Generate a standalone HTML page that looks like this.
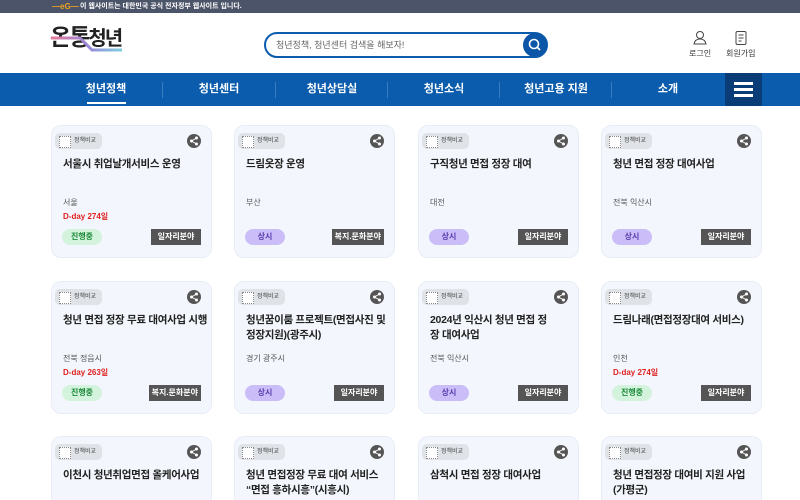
<!DOCTYPE html>
<html style="width:800px;height:500px;overflow:hidden"><head><meta charset="utf-8"><style>
*{margin:0;padding:0;box-sizing:border-box}
body{width:800px;height:500px;overflow:hidden;background:#fff;font-family:"Liberation Sans","Noto Sans CJK KR",sans-serif;position:relative;color:#222}
.top{position:absolute;left:0;top:0;width:800px;height:13px;background:#4b5468;color:#fff;font-size:7px;font-weight:bold;line-height:13px}
.top span{position:absolute;left:80px}
.top i{position:absolute;left:52px;top:2px;font-style:normal;color:#f0a020;font-size:8px;line-height:9px}
.logo{position:absolute;left:50px;top:22px;width:75px;height:34px;font-size:23px;font-weight:bold;letter-spacing:-2px;color:#222;line-height:30px;white-space:nowrap}
.search{position:absolute;left:264px;top:32px;width:284px;height:26px;border:2px solid #0b5cad;border-radius:13px;font-size:9px;color:#666;line-height:22px;padding-left:10px}
.sbtn{position:absolute;right:-1px;top:-1px;width:24px;height:24px;border-radius:12px;background:#0b56a6}
.util{position:absolute;top:30px;font-size:8px;color:#333;text-align:center}
.nav{position:absolute;left:0;top:73px;width:800px;height:33px;background:#0b5cad}
.nav .m{position:absolute;top:0;height:33px;line-height:32px;color:#fff;font-size:11px;font-weight:bold;text-align:center;width:112px}
.sep{position:absolute;top:9px;width:1px;height:16px;background:#3a7cc0}
.ham{position:absolute;left:725px;top:0;width:37px;height:33px;background:#0a3d78}
.ham b{position:absolute;left:9px;width:19px;height:3px;background:#fff}
.card{position:absolute;width:161px;height:133px;background:#f3f7fd;border:1px solid #e8edf5;border-radius:10px}
.chk{position:absolute;left:3px;top:7px;width:47px;height:16px;background:#dfe2e7;border-radius:5px;font-size:6px;line-height:16px;padding-left:19px;color:#444;white-space:nowrap}
.chk:before{content:"";position:absolute;left:4px;top:3px;width:10px;height:10px;border:1px dotted #888;background:#fff}
.sh{position:absolute;left:135px;top:8px;width:14px;height:14px;border-radius:7px;background:#555}
.t{position:absolute;left:11px;top:31px;width:138px;font-size:10.5px;font-weight:bold;line-height:15px;color:#222;letter-spacing:-0.3px}
.r{position:absolute;left:11px;font-size:8px;color:#555}
.d{position:absolute;left:11px;font-size:8px;color:#e02020;font-weight:bold}
.st{position:absolute;left:10px;bottom:12px;width:40px;height:16px;border-radius:8px;font-size:8px;line-height:16px;text-align:center;font-weight:bold}
.g{background:#d4f3dc;color:#1a8a3a}.p{background:#cbbdf7;color:#5a3fb0}
.cat{position:absolute;right:10px;bottom:12px;min-width:50px;padding:0 3px;height:16px;background:#555;color:#fff;font-size:8px;line-height:16px;text-align:center;font-weight:bold;white-space:nowrap}
.r3{height:64px;border-bottom:none;border-radius:10px 10px 0 0}
</style></head><body>
<div class="top"><i>—eG—</i><span>이 웹사이트는 대한민국 공식 전자정부 웹사이트 입니다.</span></div>
<div class="logo">온통<span style="font-size:20px">청년</span>
<svg style="position:absolute;left:0;top:10px" width="75" height="22"><path d="M1 6 H30 L42 18 H72" stroke="url(#gr)" stroke-width="3" fill="none"/><defs><linearGradient id="gr"><stop offset="0" stop-color="#e77a9a"/><stop offset=".5" stop-color="#9b86d6"/><stop offset="1" stop-color="#7fcfe0"/></linearGradient></defs></svg></div>
<div class="search">청년정책, 청년센터 검색을 해보자!<div class="sbtn"><svg width="24" height="24"><circle cx="11" cy="11" r="4.5" stroke="#fff" stroke-width="1.6" fill="none"/><path d="M14.5 14.5 L17 17" stroke="#fff" stroke-width="1.6"/></svg></div></div>
<div class="util" style="left:689px"><svg width="16" height="16"><circle cx="8" cy="5" r="3.5" stroke="#444" fill="none"/><path d="M2 14 Q3 9 8 9 Q13 9 14 14 Z" stroke="#444" fill="none"/></svg><br>로그인</div>
<div class="util" style="left:726px"><svg width="16" height="16"><rect x="3" y="1.5" width="10" height="13" rx="1.5" stroke="#444" fill="none"/><path d="M5.5 5h5M5.5 8h5M5.5 11h3" stroke="#444"/></svg><br>회원가입</div>
<div class="nav">
<div class="m" style="left:50px">청년정책<b style="position:absolute;left:37px;bottom:2px;width:39px;height:2px;background:#fff"></b></div>
<span class="sep" style="left:162px"></span><div class="m" style="left:163px">청년센터</div>
<span class="sep" style="left:275px"></span><div class="m" style="left:276px">청년상담실</div>
<span class="sep" style="left:387px"></span><div class="m" style="left:388px">청년소식</div>
<span class="sep" style="left:499px"></span><div class="m" style="left:500px">청년고용 지원</div>
<span class="sep" style="left:611px"></span><div class="m" style="left:612px">소개</div>
<div class="ham"><b style="top:9px"></b><b style="top:15px"></b><b style="top:21px"></b></div>
</div>

<svg width="0" height="0" style="position:absolute"><defs><g id="s"><circle cx="9.5" cy="4" r="1.5" fill="#fff"/><circle cx="4.5" cy="7" r="1.5" fill="#fff"/><circle cx="9.5" cy="10" r="1.5" fill="#fff"/><path d="M9.5 4L4.5 7L9.5 10" stroke="#fff" stroke-width=".9" fill="none"/></g></defs></svg>

<div class="card" style="left:51px;top:125px"><div class="chk">정책비교</div><svg class="sh"><use href="#s"/></svg><div class="t">서울시 취업날개서비스 운영</div><div class="r" style="top:71px">서울</div><div class="d" style="top:85px">D-day 274일</div><div class="st g">진행중</div><div class="cat">일자리분야</div></div>
<div class="card" style="left:234px;top:125px"><div class="chk">정책비교</div><svg class="sh"><use href="#s"/></svg><div class="t">드림옷장 운영</div><div class="r" style="top:71px">부산</div><div class="st p">상시</div><div class="cat">복지.문화분야</div></div>
<div class="card" style="left:418px;top:125px"><div class="chk">정책비교</div><svg class="sh"><use href="#s"/></svg><div class="t">구직청년 면접 정장 대여</div><div class="r" style="top:71px">대전</div><div class="st p">상시</div><div class="cat">일자리분야</div></div>
<div class="card" style="left:601px;top:125px"><div class="chk">정책비교</div><svg class="sh"><use href="#s"/></svg><div class="t">청년 면접 정장 대여사업</div><div class="r" style="top:71px">전북 익산시</div><div class="st p">상시</div><div class="cat">일자리분야</div></div>

<div class="card" style="left:51px;top:281px"><div class="chk">정책비교</div><svg class="sh"><use href="#s"/></svg><div class="t" style="width:150px">청년 면접 정장 무료 대여사업 시행</div><div class="r" style="top:71px">전북 정읍시</div><div class="d" style="top:85px">D-day 263일</div><div class="st g">진행중</div><div class="cat">복지.문화분야</div></div>
<div class="card" style="left:234px;top:281px"><div class="chk">정책비교</div><svg class="sh"><use href="#s"/></svg><div class="t" style="width:145px">청년꿈이룸 프로젝트(면접사진 및 정장지원)(광주시)</div><div class="r" style="top:71px">경기 광주시</div><div class="st p">상시</div><div class="cat">일자리분야</div></div>
<div class="card" style="left:418px;top:281px"><div class="chk">정책비교</div><svg class="sh"><use href="#s"/></svg><div class="t" style="width:125px">2024년 익산시 청년 면접 정장 대여사업</div><div class="r" style="top:71px">전북 익산시</div><div class="st p">상시</div><div class="cat">일자리분야</div></div>
<div class="card" style="left:601px;top:281px"><div class="chk">정책비교</div><svg class="sh"><use href="#s"/></svg><div class="t" style="width:150px">드림나래(면접정장대여 서비스)</div><div class="r" style="top:71px">인천</div><div class="d" style="top:85px">D-day 274일</div><div class="st g">진행중</div><div class="cat">일자리분야</div></div>

<div class="card r3" style="left:51px;top:436px"><div class="chk">정책비교</div><svg class="sh"><use href="#s"/></svg><div class="t" style="width:150px">이천시 청년취업면접 올케어사업</div></div>
<div class="card r3" style="left:234px;top:436px"><div class="chk">정책비교</div><svg class="sh"><use href="#s"/></svg><div class="t">청년 면접정장 무료 대여 서비스 “면접 흥하시흥”(시흥시)</div></div>
<div class="card r3" style="left:418px;top:436px"><div class="chk">정책비교</div><svg class="sh"><use href="#s"/></svg><div class="t">삼척시 면접 정장 대여사업</div></div>
<div class="card r3" style="left:601px;top:436px"><div class="chk">정책비교</div><svg class="sh"><use href="#s"/></svg><div class="t">청년 면접정장 대여비 지원 사업 (가평군)</div></div>
</body></html>
